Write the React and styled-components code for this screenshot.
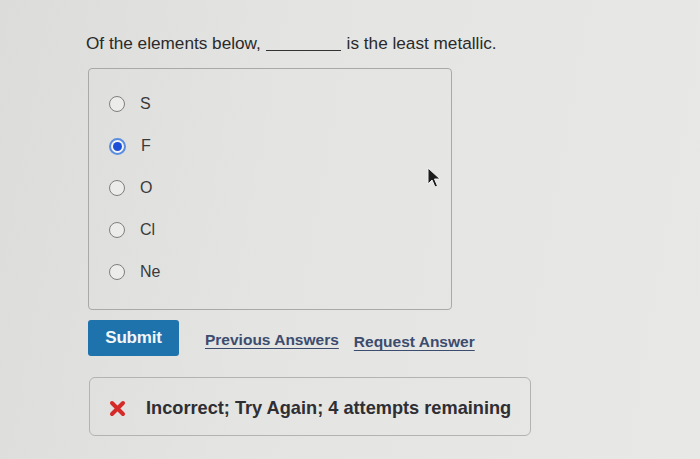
import React from "react";
import styled, { createGlobalStyle } from "styled-components";

const Global = createGlobalStyle`
  html, body { margin: 0; padding: 0; }
  body {
    width: 700px; height: 459px; overflow: hidden;
    background: linear-gradient(100deg, #dcdcda 0%, #e4e4e2 40%, #e8e8e6 100%);
    font-family: "Liberation Sans", Arial, sans-serif;
  }
`;

const Page = styled.div`
  padding: 31px 0 0 86px;
  width: 480px;
  color: #2c2c2c;
`;

const Question = styled.p`
  margin: 0;
  font-size: 17.2px;
  line-height: 24px;
  color: #2a2a2a;
`;

const Blank = styled.span`
  display: inline-block;
  width: 75px;
  margin: 0 1px 0 5px;
  border-bottom: 1px solid #333;
  transform: translateY(2px);
`;

const OptionsBox = styled.div`
  position: relative;
  margin: 13px 0 0 2px;
  width: 364px;
  height: 242px;
  border: 1.5px solid #a9a9a7;
  border-radius: 4px;
  padding: 23px 0 0 20px;
  box-sizing: border-box;
  display: flex;
  flex-direction: column;
  gap: 18px;
`;

const Option = styled.label`
  display: flex;
  align-items: center;
  gap: 15px;
  height: 24px;
  font-size: 16px;
  color: #3a3a3a;
`;

const Radio = styled.span`
  width: 14px;
  height: 14px;
  border-radius: 50%;
  border: 1.5px solid #7f7f7f;
  background: #ececea;
  display: flex;
  align-items: center;
  justify-content: center;
  box-sizing: content-box;
  ${(p) =>
    p.$checked &&
    `
    border: 2px solid #5a8de0;
    width: 13px; height: 13px;
    background: #f4f4f4;
    &::after {
      content: "";
      width: 9px; height: 9px; border-radius: 50%;
      background: #1c4fd8;
    }
  `}
`;

const Cursor = styled.svg`
  position: absolute;
  left: 337px;
  top: 98px;
`;

const Actions = styled.div`
  display: flex;
  align-items: center;
  margin: 10px 0 0 2px;
  gap: 26px;
`;

const SubmitButton = styled.button`
  width: 91px;
  height: 36px;
  border: none;
  border-radius: 3px;
  background: #1e73ad;
  color: #f4f6f8;
  font-family: inherit;
  font-weight: bold;
  font-size: 17px;
  letter-spacing: -0.2px;
`;

const Links = styled.div`
  display: flex;
  gap: 15px;
  align-items: center;
`;

const LinkText = styled.a`
  font-weight: bold;
  font-size: 15.5px;
  color: #3b4c6e;
  text-decoration: underline;
  text-underline-offset: 3px;
  text-decoration-thickness: 1px;
  position: relative;
  top: ${(p) => p.$drop || 0}px;
`;

const Feedback = styled.div`
  margin: 21px 0 0 3px;
  width: 442px;
  height: 59px;
  border: 1.5px solid #b3b3b1;
  border-radius: 6px;
  box-sizing: border-box;
  display: flex;
  align-items: center;
  padding: 4px 0 0 19px;
  gap: 20px;
  color: #2e2e33;
  font-weight: bold;
  font-size: 18.2px;
`;

export default function App() {
  const options = ["S", "F", "O", "Cl", "Ne"];
  return (
    <>
      <Global />
      <Page>
        <Question>
          Of the elements below,<Blank /> is the least metallic.
        </Question>
        <OptionsBox>
          {options.map((o) => (
            <Option key={o}>
              <Radio $checked={o === "F"} />
              {o}
            </Option>
          ))}
          <Cursor width="16" height="22" viewBox="0 0 16 22">
            <path d="M2 1 L2 17 L6 13 L9 20 L11.5 19 L8.5 12 L14 12 Z" fill="#1c1c1c" stroke="#f0f0f0" strokeWidth="1" />
          </Cursor>
        </OptionsBox>
        <Actions>
          <SubmitButton>Submit</SubmitButton>
          <Links>
            <LinkText $drop={2}>Previous Answers</LinkText>
            <LinkText $drop={4}>Request Answer</LinkText>
          </Links>
        </Actions>
        <Feedback>
          <svg width="17" height="17" viewBox="0 0 17 17">
            <path d="M3 3 L14 14 M14 3 L3 14" stroke="#d42a2a" strokeWidth="4" strokeLinecap="round" />
          </svg>
          Incorrect; Try Again; 4 attempts remaining
        </Feedback>
      </Page>
    </>
  );
}
